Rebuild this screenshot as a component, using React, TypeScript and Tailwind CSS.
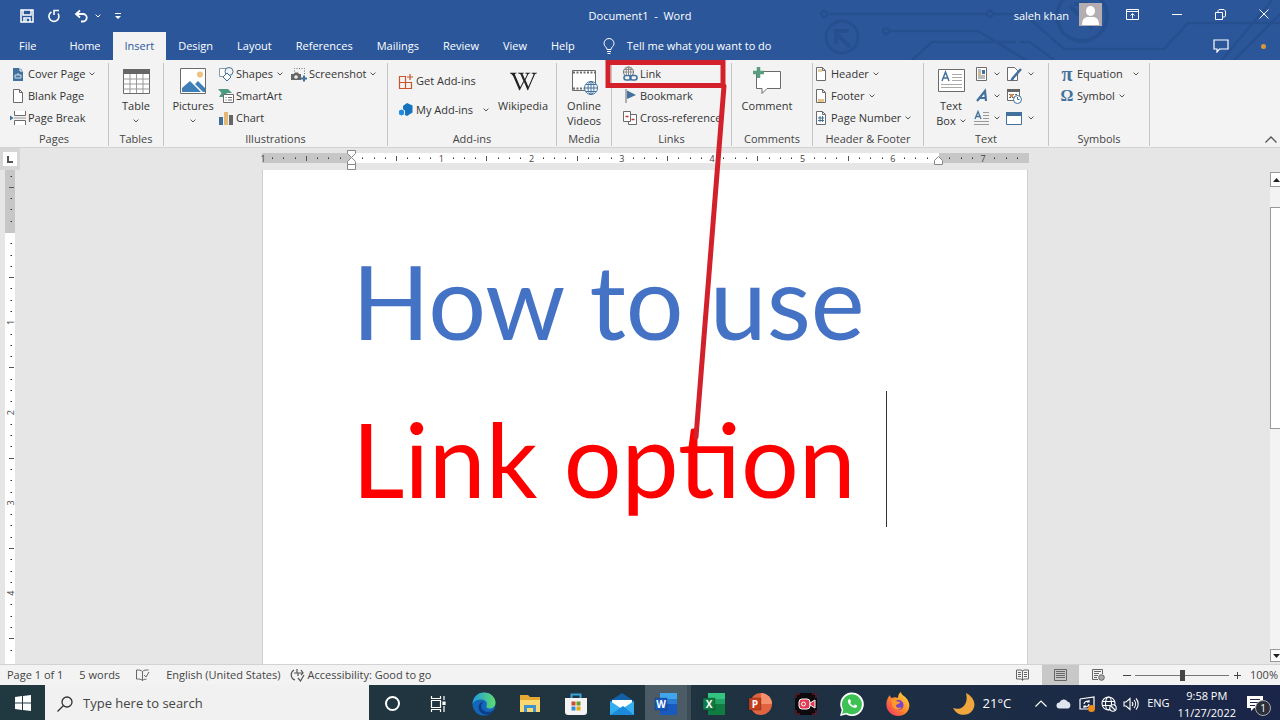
import type { ReactNode } from "react";
import { FaWikipediaW, FaWhatsapp } from "react-icons/fa";

const tabs = ["Home", "Insert", "Design", "Layout", "References", "Mailings", "Review", "View", "Help"];

const BLUE = "#41719c";
const GREY = "#6b6b6b";

function Caret({ className = "" }: { className?: string }) {
  return (
    <svg viewBox="0 0 6 4" className={`h-1 w-[6px] shrink-0 ${className}`} fill="none" stroke="#555" strokeWidth="1">
      <path d="M.6.6 3 3 5.4.6" />
    </svg>
  );
}

function Icon({ children, className = "h-4 w-4" }: { children: ReactNode; className?: string }) {
  return (
    <svg viewBox="0 0 16 16" className={`shrink-0 ${className}`} fill="none" stroke={GREY} strokeWidth="1">
      {children}
    </svg>
  );
}

function BigIcon({ children }: { children: ReactNode }) {
  return (
    <svg viewBox="0 0 28 28" className="h-7 w-7" fill="none" stroke={GREY} strokeWidth="1">
      {children}
    </svg>
  );
}

function Row({ icon, label, caret = false, far = false }: { icon: ReactNode; label: string; caret?: boolean; far?: boolean }) {
  return (
    <button className="flex h-[22px] items-center gap-[2px] whitespace-nowrap">
      {icon}
      <span>{label}</span>
      {caret && <Caret className={far ? "ml-2" : "ml-[2px]"} />}
    </button>
  );
}

function Big({ icon, label, caret = false, className = "" }: { icon: ReactNode; label: string; caret?: boolean; className?: string }) {
  return (
    <button className={`flex flex-col items-center pt-1 ${className}`}>
      {icon}
      <span className="mt-[3px] leading-[15px]">{label}</span>
      {caret && <Caret className="mt-[6px]" />}
    </button>
  );
}

function Group({ label, className, children }: { label: string; className: string; children: ReactNode }) {
  return (
    <section aria-label={label} className={`flex shrink-0 flex-col border-r border-[#c4c4c4] ${className}`}>
      <div className="flex h-[69px] items-start">{children}</div>
      <div className="text-center leading-[14px] text-[#444]">{label}</div>
    </section>
  );
}

const pageOutline = "M3.5 1.5h6l3 3v10h-9zM9.5 1.5v3h3";

function TitleArt() {
  return (
    <svg viewBox="0 0 480 60" className="absolute right-0 top-0 h-[60px] w-[480px]" fill="none" stroke="#264f8f" strokeWidth="2.500">
      <circle cx="24" cy="14" r="3" />
      <path d="M28 14h159M194 14h30l40 35h100l24-26h92" />
      <circle cx="190" cy="14" r="3" />
      <circle cx="86" cy="31" r="3" />
      <path d="M90 31h88l48 29M112 60l20-18h84M220 42h10l24 18M422 60l50-60M434 60l46-46" />
      <circle cx="42" cy="37" r="16" strokeWidth="3" />
      <path d="M50 47 36 33M36 44V31h13" strokeWidth="4" />
      <circle cx="282" cy="16" r="25" strokeWidth="4" />
      <path d="m270 6 22 22M274 4h14" strokeWidth="4" />
    </svg>
  );
}

function TitleBar() {
  return (
    <div className="relative grid h-8 grid-cols-[1fr_auto_1fr] items-center text-white">
      <div className="flex items-center pl-5">
        <button aria-label="Save">
          <svg viewBox="0 0 14 14" className="h-[14px] w-[14px]" fill="none" stroke="#fff" strokeWidth="1.5">
            <path d="M1 1h12v12H1zM3 1v5h8V1M4 13V9h6v4M6 10v3" />
          </svg>
        </button>
        <button aria-label="Repeat" className="ml-[13px]">
          <svg viewBox="0 0 14 14" className="h-[14px] w-[14px]" fill="none" stroke="#fff" strokeWidth="1.6">
            <path d="M4.500 3A5 5 0 1 0 11 4.500M7 6V1.500h5" />
          </svg>
        </button>
        <button aria-label="Undo" className="ml-[13px]">
          <svg viewBox="0 0 15 14" className="h-[14px] w-[15px]" fill="none" stroke="#fff" strokeWidth="1.8">
            <path d="M6 1.500 2 5l4 3.500M2 5h7a3.500 3.500 0 1 1 0 7.500H7" />
          </svg>
        </button>
        <svg viewBox="0 0 6 4" className="ml-[6px] h-1 w-[6px]" fill="none" stroke="#fff">
          <path d="M.6.6 3 3 5.4.6" />
        </svg>
        <button aria-label="Customize Quick Access Toolbar" className="ml-[14px]">
          <svg viewBox="0 0 6 7" className="h-[7px] w-[6px]" fill="#fff">
            <path d="M0 0h6v1H0zM0 3h6L3 6z" />
          </svg>
        </button>
      </div>
      <div className="whitespace-pre text-[11px]">Document1  -  Word</div>
      <div className="flex items-center justify-end pr-[11px]">
        <span className="text-[11px]">saleh khan</span>
        <svg viewBox="0 0 23 23" className="mb-1 ml-[10px] h-[23px] w-[23px]" fill="#fff">
          <path d="M0 0h23v23H0z" fill="#b4aeb2" />
          <ellipse cx="11.500" cy="8" rx="4.500" ry="5" />
          <path d="M3 22c0-6 3-8 6-8h5c3 0 6 2 6 8z" />
        </svg>
        <button aria-label="Ribbon Display Options" className="mb-1 ml-6">
          <svg viewBox="0 0 13 11" className="h-[11px] w-[13px]" fill="none" stroke="#fff">
            <path d="M.5.5h12v10H.5zM.5 2.500h12M6.500 9.500V5M4.500 6.500l2-2 2 2" />
          </svg>
        </button>
        <button aria-label="Minimize" className="mb-1 ml-[33px] h-px w-[10px] bg-white" />
        <button aria-label="Restore" className="mb-1 ml-[33px]">
          <svg viewBox="0 0 11 11" className="h-[11px] w-[11px]" fill="none" stroke="#fff">
            <path d="M.5 3.500h7v7h-7zM3 3V1.500L4 .5h5l1.500 1.500v5L9.500 8H8" />
          </svg>
        </button>
        <button aria-label="Close" className="mb-1 ml-[33px]">
          <svg viewBox="0 0 10 10" className="h-[10px] w-[10px]" fill="none" stroke="#fff">
            <path d="m.5.5 9 9M9.500.5l-9 9" />
          </svg>
        </button>
      </div>
    </div>
  );
}

function TabBar() {
  return (
    <nav className="relative flex h-7 items-stretch pl-[7px] text-[11px] text-white">
      <button className="mr-[9px] px-3">File</button>
      {tabs.map((t) => (
        <button key={t} className={t === "Insert" ? "bg-[#f3f3f3] px-3 text-[#2b579a]" : "px-3"}>
          {t}
        </button>
      ))}
      <button className="ml-4 flex items-center gap-3">
        <svg viewBox="0 0 12 16" className="h-4 w-3" fill="none" stroke="#fff">
          <path d="M4 11.500C4 9 1 8.500 1 5.500a5 5 0 0 1 10 0C11 8.500 8 9 8 11.500zM4 13.500h4M4.500 15.500h3" />
        </svg>
        Tell me what you want to do
      </button>
      <div className="ml-auto flex items-center pr-[14px]">
        <button aria-label="Comments">
          <svg viewBox="0 0 16 14" className="h-[14px] w-4" fill="none" stroke="#fff" strokeWidth="1.2">
            <path d="M1 1h14v9H6.500L4 13v-3H1z" />
          </svg>
        </button>
        <span className="ml-8 h-[5px] w-[5px] rounded-full bg-[#d9963c]" />
      </div>
    </nav>
  );
}

function Ribbon() {
  return (
    <div className="flex h-[88px] items-start border-b border-[#d2d2d2] bg-[#f3f3f3] pt-[3px] text-[11px] text-[#333]">
      <Group label="Pages" className="w-[109px]">
        <div className="pl-[10px]">
          <Row
            label="Cover Page"
            caret
            icon={
              <Icon>
                <path d="M3 2h7l3 3v10H3z" fill={BLUE} stroke="none" />
                <path d="M10 2v3h3" stroke="#fff" />
                <path d="M5 9h6v3H5zM8 7v2" stroke="#d5e3f0" />
              </Icon>
            }
          />
          <Row label="Blank Page" icon={<Icon><path d={pageOutline} fill="#fff" /></Icon>} />
          <Row
            label="Page Break"
            icon={
              <Icon>
                <path d="M4.500 1v4.500h11V1M4.500 15v-4.500h11V15" fill="#fff" />
                <path d="M4 8h12" stroke="#999" />
                <path d="m0 5.500 3.500 2.500L0 10.500z" fill={BLUE} stroke="none" />
              </Icon>
            }
          />
        </div>
      </Group>

      <Group label="Tables" className="w-[55px]">
        <Big
          className="w-full"
          label="Table"
          caret
          icon={
            <BigIcon>
              <path d="M1.500 2.500h26v24h-26z" fill="#fff" />
              <path d="M1 2h27v5H1z" fill="#666" stroke="none" />
              <path d="M1.500 12h26M1.500 17h26M1.500 22h26M8 7v19M14.500 7v19M21 7v19" stroke="#999" />
            </BigIcon>
          }
        />
      </Group>

      <Group label="Illustrations" className="w-[224px]">
        <Big
          className="w-[54px] pl-1"
          label="Pictures"
          caret
          icon={
            <BigIcon>
              <path d="M1.500 1.500h25v25h-25z" fill="#fff" />
              <circle cx="21" cy="7.500" r="3" fill="#ecc27e" stroke="none" />
              <path d="M3 25v-4l8-7 11 11zM16 17l3-3 7 7v4h-2z" fill="#3f7fb8" stroke="none" />
            </BigIcon>
          }
        />
        <div>
          <div className="flex gap-2">
            <Row
              label="Shapes"
              caret
              icon={
                <Icon>
                  <path d="M1.500 2.500h8v8h-8z" fill="#fff" stroke="#8a9aa8" />
                  <circle cx="11" cy="5.500" r="4" fill="#f3f3f3" stroke={BLUE} />
                  <path d="m9 7 4 4-4 4-4-4z" fill="#fff" stroke={BLUE} />
                </Icon>
              }
            />
            <Row
              label="Screenshot"
              caret
              icon={
                <Icon>
                  <path d="M3.500 8V2.500h10V9" strokeDasharray="1 1.500" />
                  <path d="M0 8h3l1-1.500h3L8 8h2v6H0z" fill="#666" stroke="none" />
                  <circle cx="5" cy="11" r="1.800" fill="#eee" stroke="none" />
                  <path d="M13 9.500v6M10 12.500h6" stroke={BLUE} strokeWidth="2" />
                </Icon>
              }
            />
          </div>
          <Row
            label="SmartArt"
            icon={
              <Icon>
                <path d="M0 1h10l4 4H9l-3 4H1l2.500-4z" fill="#4d9b80" stroke="none" />
                <path d="M5.500 6.500h10v8h-10z" fill="#fff" />
                <path d="M7.500 9.500h1M10 9.500h4M7.500 12h1M10 12h4" />
              </Icon>
            }
          />
          <Row
            label="Chart"
            icon={
              <Icon>
                <path d="M1 7h4v8H1z" fill="#3f6f9f" stroke="none" />
                <path d="M6 2h4v13H6z" fill="#e6b878" stroke="none" />
                <path d="M11 5h4v10h-4z" fill="#666" stroke="none" />
              </Icon>
            }
          />
        </div>
      </Group>

      <Group label="Add-ins" className="w-[169px]">
        <div className="flex flex-col gap-[7px] pl-[10px] pt-[7px]">
          <Row
            label="Get Add-ins"
            icon={
              <Icon>
                <path d="M1.500 3.500h6v6h-6zM1.500 9.500h6v6h-6zM7.500 9.500h6v6h-6zM12 1v6M9 4h6" stroke="#c8552b" strokeWidth="1.200" />
              </Icon>
            }
          />
          <Row
            label="My Add-ins"
            caret
            far
            icon={
              <Icon>
                <path d="m9 1 5.500 2.500v7L9 14l-4-2V4z" fill="#1673c0" stroke="none" />
                <path d="m3.500 7 3 1.500v4l-3 1.500-3-1.500v-4z" fill="#1f8ae0" stroke="#f3f3f3" />
              </Icon>
            }
          />
        </div>
        <Big
          className="ml-auto w-[66px]"
          label="Wikipedia"
          icon={
            <span className="flex h-7 items-center">
              <FaWikipediaW className="h-[27px] w-[27px] text-[#222]" />
            </span>
          }
        />
      </Group>

      <Group label="Media" className="w-[55px]">
        <Big
          className="w-full"
          label="Online Videos"
          icon={
            <BigIcon>
              <path d="M2.500 3.500h23v20h-23z" fill="#fff" />
              <path d="M3 5.500h22M3 21.500h14" strokeDasharray="2 1.500" strokeWidth="2" />
              <circle cx="21" cy="21" r="6.500" fill="#fff" stroke={BLUE} />
              <path d="M14.500 21h13M21 14.500v13M16 17.500h10M16 24.500h10" stroke={BLUE} />
              <ellipse cx="21" cy="21" rx="3" ry="6.500" stroke={BLUE} />
            </BigIcon>
          }
        />
      </Group>

      <Group label="Links" className="w-[120px]">
        <div className="pl-[10px]">
          <Row
            label="Link"
            icon={
              <Icon>
                <circle cx="6.500" cy="6" r="5" fill="#fff" />
                <path d="M1.500 6h10M6.500 1v9M2.500 3.500h8" stroke="#888" />
                <ellipse cx="6.500" cy="6" rx="2.300" ry="5" stroke="#888" />
                <path d="M1 9h15v6H1z" fill="#f3f3f3" stroke="none" />
                <rect x="2" y="9.500" width="7" height="4.500" rx="2.200" stroke={BLUE} strokeWidth="1.600" />
                <rect x="8" y="9.500" width="7" height="4.500" rx="2.200" stroke={BLUE} strokeWidth="1.600" />
              </Icon>
            }
          />
          <Row
            label="Bookmark"
            icon={
              <Icon>
                <path d="M4 1v14" />
                <path d="M5 2.500 14 7l-9 4z" fill={BLUE} stroke="none" />
              </Icon>
            }
          />
          <Row
            label="Cross-reference"
            icon={
              <Icon>
                <path d="M8.500 4.500h6v10h-8V12" fill="#fff" />
                <path d="M1.500 1.500h7v10h-7z" fill="#fff" />
                <path d="M3.500 6.500h3M9.500 9.500h3" stroke="#c0392b" strokeWidth="1.500" />
              </Icon>
            }
          />
        </div>
      </Group>

      <Group label="Comments" className="w-[81px]">
        <Big
          className="w-[70px]"
          label="Comment"
          icon={
            <BigIcon>
              <path d="M3.500 4.500h24v17H14l-5 5v-5H3.500z" fill="#fff" />
              <path d="M5.500 0v11M0 5.500h11" stroke="#5a9c80" strokeWidth="3.500" />
            </BigIcon>
          }
        />
      </Group>

      <Group label="Header & Footer" className="w-[111px]">
        <div>
          <Row label="Header" caret icon={<Icon><path d={pageOutline} fill="#fff" /><path d="M5 3h4v3H5z" fill="#e2cf9c" stroke="none" /></Icon>} />
          <Row label="Footer" caret icon={<Icon><path d={pageOutline} fill="#fff" /><path d="M5 11h6v3H5z" fill="#e6c489" stroke="none" /></Icon>} />
          <Row label="Page Number" caret icon={<Icon><path d={pageOutline} fill="#fff" /><path d="M7 6v6M9.500 6v6M5 8h6M5 10.500h6" stroke={BLUE} /></Icon>} />
        </div>
      </Group>

      <Group label="Text" className="w-[125px]">
        <button className="flex w-[50px] flex-col items-center pl-1 pt-1">
          <BigIcon>
            <path d="M1.500 2.500h26v22h-26z" fill="#fff" />
            <path d="M15 7.500h10M15 10.500h10M15 13.500h10M4 17.500h21M4 20.500h21" stroke="#aaa" />
            <path d="m5 14 3.500-9L12 14M6 11h5" stroke={BLUE} strokeWidth="1.500" />
          </BigIcon>
          <span className="mt-[3px] leading-[15px]">Text</span>
          <span className="flex items-center gap-1 leading-[15px]">
            Box <Caret />
          </span>
        </button>
        <div className="grid grid-cols-[auto_auto] gap-x-[6px]">
          <button aria-label="Quick Parts" className="flex h-[22px] items-center gap-1">
            <Icon>
              <path d="M2.500 1.500h10v13h-10z" fill="#fff" />
              <path d="M4 4h3M4 6h3M4 10h7M4 12h7" stroke="#777" />
              <path d="M8 4h3v4H8z" fill={BLUE} stroke="none" />
              <path d="M4 7h3v2H4z" fill="#e6b878" stroke="none" />
            </Icon>
            <Caret />
          </button>
          <button aria-label="Signature Line" className="flex h-[22px] items-center gap-[6px]">
            <Icon>
              <path d="M1.500 1.500h7l3 3v10h-10z" fill="#fff" />
              <path d="m15 3-8 9-1.500 2.500" stroke={BLUE} strokeWidth="2.500" />
            </Icon>
            <Caret />
          </button>
          <button aria-label="WordArt" className="flex h-[22px] items-center gap-1">
            <Icon>
              <path d="M3 13 11 3l1 10M6 10h6" stroke={BLUE} strokeWidth="2.200" />
            </Icon>
            <Caret />
          </button>
          <button aria-label="Date & Time" className="flex h-[22px] items-center">
            <Icon>
              <path d="M1.500 1.500h12v11h-12z" fill="#fff" />
              <path d="M1 1h13v3H1z" fill="#666" stroke="none" />
              <path d="M3 6.500h9M3 9.500h5" strokeDasharray="2 1" />
              <path d="M4 6h3v3H4z" fill="#d98646" stroke="none" />
              <circle cx="11.500" cy="11.500" r="4" fill="#fff" stroke={BLUE} />
              <path d="M11.500 9v2.500h2" stroke={BLUE} />
            </Icon>
          </button>
          <button aria-label="Drop Cap" className="flex h-[22px] items-center gap-1">
            <Icon>
              <path d="m1 9 3-7.500L7 9M2 6.500h4" stroke={BLUE} strokeWidth="1.300" />
              <path d="M9 2.500h6M9 5.500h6M9 8.500h6M0 11.500h15M0 14.500h15" stroke="#999" />
            </Icon>
            <Caret />
          </button>
          <button aria-label="Object" className="flex h-[22px] items-center gap-[6px]">
            <Icon>
              <path d="M.5 2.500h15v12H.5z" fill="#fff" stroke={BLUE} />
              <path d="M0 2h16v4H0z" fill={BLUE} stroke="none" />
            </Icon>
            <Caret />
          </button>
        </div>
      </Group>

      <Group label="Symbols" className="w-[101px]">
        <div className="pl-[10px]">
          <Row label="Equation" caret far icon={<span className="w-4 text-center font-[Liberation_Serif,serif] text-xl leading-4 font-bold text-[#41719c]">π</span>} />
          <Row label="Symbol" caret icon={<span className="w-4 text-center font-[Liberation_Serif,serif] text-base leading-4 font-bold text-[#41719c]">Ω</span>} />
        </div>
      </Group>
      <button aria-label="Collapse the Ribbon" className="mr-[3px] mb-1 ml-auto self-end">
        <svg viewBox="0 0 12 7" className="h-[7px] w-3" fill="none" stroke="#555" strokeWidth="1.300">
          <path d="m.5 6.500 5.500-5.500 5.500 5.500" />
        </svg>
      </button>
    </div>
  );
}

const INCH = 90.3;

// Eighth-inch marks measured from the left margin, which sits 89px into the page.
function HorizontalRuler() {
  const marks = Array.from({ length: 67 }, (_, i) => i - 7);
  return (
    <svg viewBox="0 0 770 20" className="h-5 w-[770px]" fontFamily="Open Sans, sans-serif" fontSize="9" textAnchor="middle">
      <path d="M2 3h767v10H2z" fill="#c6c6c6" />
      <path d="M91 3h588v10H91z" fill="#fff" />
      {marks.map((m) => {
        const x = 91 + (m * INCH) / 8;
        if (m === 0 || x > 765 || m === 52) return null;
        if (m % 8 === 0) return <text key={m} x={x} y="11.500" fill="#444">{m / 8}</text>;
        return m % 4 === 0 ? (
          <path key={m} d={`M${Math.round(x)} 6h1v5h-1z`} fill="#555" />
        ) : (
          <path key={m} d={`M${Math.round(x)} 7.500h1v1.500h-1z`} fill="#333" />
        );
      })}
      <text x="3" y="11.500" fill="#444">1</text>
      <g fill="#fff" stroke="#888">
        <path d="M87.500.5h8v3l-4 4-4-4zM91.500 7.500l4 4v3h-8v-3zM87.500 14.500h8v5h-8z" />
        <path d="m678.500 6.500 4 4v4h-8v-4z" />
      </g>
    </svg>
  );
}

function VerticalRuler() {
  const marks = Array.from({ length: 43 }, (_, i) => i - 5);
  return (
    <svg viewBox="0 0 16 494" className="ml-[2px] h-[494px] w-4" fontFamily="Open Sans, sans-serif" fontSize="9" textAnchor="middle">
      <path d="M3 0h10v494H3z" fill="#fff" />
      <path d="M3 0h10v63H3z" fill="#c6c6c6" />
      {marks.map((m) => {
        const y = 62 + (m * INCH) / 8;
        if (m === 0) return null;
        if (m % 8 === 0)
          return (
            <text key={m} transform={`translate(12 ${y}) rotate(-90)`} fill="#444">
              {m / 8}
            </text>
          );
        return m % 4 === 0 ? (
          <path key={m} d={`M7 ${Math.round(y)}h5v1H7z`} fill="#555" />
        ) : (
          <path key={m} d={`M8.500 ${Math.round(y)}h1.500v1H8.500z`} fill="#333" />
        );
      })}
    </svg>
  );
}

function Workspace() {
  return (
    <main className="grid min-h-0 flex-1 grid-cols-[20px_1fr_10px] bg-[#e6e6e6]">
      <div className="flex min-h-0 flex-col overflow-hidden">
        <button aria-label="Tab selector" className="flex h-[22px] w-5 shrink-0 items-center justify-center bg-[#d6d6d6]">
          <svg viewBox="0 0 14 14" className="h-[14px] w-[14px]">
            <path d="M0 0h14v14H0z" fill="#fff" />
            <path d="M5 4v6h5" fill="none" stroke="#555" strokeWidth="2" />
          </svg>
        </button>
        <VerticalRuler />
      </div>

      <div className="flex min-h-0 flex-col items-center overflow-hidden">
        <div className="flex h-[22px] w-[770px] shrink-0 pt-[2px]">
          <HorizontalRuler />
        </div>
        <article className="w-[766px] flex-1 border-x border-[#d0d0d0] bg-white pt-[52px] pl-[89px] font-[Lato,sans-serif] text-[102px] leading-[158px] whitespace-nowrap">
          <p className="text-[#4472c4]">How to use</p>
          <p className="flex items-center gap-[30px] text-[#ff0000]">
            Link option
            <span className="h-[136px] w-px bg-[#333]" />
          </p>
        </article>
      </div>

      <div className="flex flex-col pt-6">
        <button aria-label="Scroll up" className="flex h-[15px] items-center justify-end border border-r-0 border-[#999] bg-white">
          <svg viewBox="0 0 7 4" className="h-1 w-[7px]">
            <path d="M0 4h7L3.500 0z" fill="#222" />
          </svg>
        </button>
        <div className="flex-1 bg-[#f3f3f3] pt-5">
          <div className="h-[222px] border border-r-0 border-[#999] bg-white" />
        </div>
        <button aria-label="Scroll down" className="mb-[2px] flex h-[13px] items-center justify-end border border-r-0 border-[#999] bg-white">
          <svg viewBox="0 0 7 4" className="h-1 w-[7px]">
            <path d="M0 0h7L3.500 4z" fill="#222" />
          </svg>
        </button>
      </div>
    </main>
  );
}

function StatusBar() {
  return (
    <footer className="flex h-[21px] items-center border-t border-[#d2d2d2] bg-[#f3f3f3] pl-[7px] text-[11px] whitespace-nowrap text-[#444]">
      <span>Page 1 of 1</span>
      <span className="ml-4">5 words</span>
      <svg viewBox="0 0 14 12" className="ml-4 h-3 w-[14px]" fill="none" stroke="#666">
        <path d="M6.500 2.500C5 1 3 1 .5 1v9c2.500 0 4.500 0 6 1.500V2.500C8 1 9.500 1 12.500 1M6.500 11.500c1-1 2-1.300 4-1.300M8 6l2 2 3-5" />
      </svg>
      <span className="ml-4">English (United States)</span>
      <svg viewBox="0 0 15 14" className="ml-[10px] h-[14px] w-[15px]" fill="none" stroke="#555" strokeWidth="1.200">
        <path d="M4 2A5.500 5.500 0 0 0 5 12M7 1v4M4 5h9M8 5v3M8 10l2.500 3L14 7" />
        <path d="m11 2 2 3-2 2" />
      </svg>
      <span className="ml-[2px]">Accessibility: Good to go</span>

      <div className="ml-auto flex h-full items-center">
        <button aria-label="Read Mode">
          <svg viewBox="0 0 13 12" className="h-3 w-[13px]" fill="none" stroke="#666">
            <path d="M6.500 1.500v10M6.500 2 5 1H.5v9H5l1.500 1L8 10h4.500V1H8zM2 3.500h3M2 5.500h3M2 7.500h3M8 3.500h3M8 5.500h3M8 7.500h3" />
          </svg>
        </button>
        <button aria-label="Print Layout" className="ml-[13px] flex h-full w-[37px] items-center justify-center bg-[#c8c8c8]">
          <svg viewBox="0 0 13 12" className="h-3 w-[13px]" fill="none" stroke="#666">
            <path d="M.5.5h12v11H.5zM2 2.500h9M2 4.500h9M2 6.500h9M2 8.500h9" />
          </svg>
        </button>
        <button aria-label="Web Layout" className="ml-[13px]">
          <svg viewBox="0 0 13 12" className="h-3 w-[13px]" fill="none" stroke="#666">
            <path d="M6 10.500H.5v-10h10V5M2 2.500h7M2 4.500h5M2 6.500h4M2 8.500h3" />
            <circle cx="9.500" cy="8.500" r="2.800" fill="#aaa" />
          </svg>
        </button>
        <button aria-label="Zoom out" className="ml-[18px] h-px w-2 bg-[#444]" />
        <input
          type="range"
          aria-label="Zoom"
          defaultValue={50}
          className="ml-1 h-3 w-[94px] appearance-none bg-[linear-gradient(#777,#777)] bg-[length:100%_1px] bg-center bg-no-repeat [&::-webkit-slider-thumb]:h-[11px] [&::-webkit-slider-thumb]:w-[5px] [&::-webkit-slider-thumb]:appearance-none [&::-webkit-slider-thumb]:bg-[#444]"
        />
        <button aria-label="Zoom in" className="ml-1">
          <svg viewBox="0 0 9 9" className="h-[9px] w-[9px]" stroke="#444">
            <path d="M4.500 1v7M1 4.500h7" />
          </svg>
        </button>
        <span className="mr-[2px] ml-2">100%</span>
      </div>
    </footer>
  );
}

function OfficeIcon({ letter, dark, mid, light, round = false }: { letter: string; dark: string; mid: string; light: string; round?: boolean }) {
  return (
    <svg viewBox="0 0 24 24" className="h-6 w-6">
      {round ? (
        <>
          <circle cx="13" cy="12" r="11" fill={mid} />
          <path d="M13 1a11 11 0 0 1 11 11H13z" fill={light} />
        </>
      ) : (
        <>
          <path d="M6 1h17v6H6z" fill={light} />
          <path d="M6 7h17v5H6z" fill={mid} />
          <path d="M6 12h17v11H6z" fill={dark} />
        </>
      )}
      <path d="M1 6h12v12H1z" fill={dark} stroke="#0003" />
      <text x="7" y="15.500" fontSize="10" fontWeight="700" fontFamily="Open Sans, sans-serif" fill="#fff" textAnchor="middle">
        {letter}
      </text>
    </svg>
  );
}

const apps: { name: string; icon: ReactNode }[] = [
  { name: "Cortana", icon: <span className="h-[15px] w-[15px] rounded-full border-2 border-white" /> },
  {
    name: "Task View",
    icon: (
      <svg viewBox="0 0 16 16" className="h-4 w-4" fill="none" stroke="#fff" strokeWidth="1.200">
        <path d="M1.500 4.500h9v7h-9zM1.500 0v2.500h9V0M1.500 16v-2.500h9V16M14 0v4M14 10v6" />
        <path d="M13 6h2v2.500h-2z" fill="#fff" />
      </svg>
    ),
  },
  {
    name: "Edge",
    icon: (
      <svg viewBox="0 0 24 24" className="h-6 w-6">
        <defs>
          <linearGradient id="edgeTop" x1="0" x2="1">
            <stop offset="0" stopColor="#1f9be0" />
            <stop offset="1" stopColor="#5fdc6a" />
          </linearGradient>
        </defs>
        <circle cx="12" cy="12" r="11.500" fill="#1566b8" />
        <path d="M.5 12C1 5 6 .5 12 .5c7 0 11.500 5 11.500 10 0 4-3 6-6 6-2.500 0-3.500-1-3-2.500C16 10 13 7.500 9 7.500 5 7.500 2 9 .5 12z" fill="url(#edgeTop)" />
        <path d="M12 10c-3 1-4 5-1 8 3 2.500 7 2.500 11 0-1 2-3 4-5 4.500C10 23.500 5 19 7 13c1-2.500 3-3.500 5-3z" fill="#0c3f87" />
      </svg>
    ),
  },
  {
    name: "File Explorer",
    icon: (
      <svg viewBox="0 0 22 20" className="h-5 w-[22px]">
        <path d="M1 1h8l2 2h10v15H1z" fill="#e5a832" />
        <path d="M1 6h20v12H1z" fill="#fbd872" />
        <path d="M5 18v-7h12v7h-3v-4H8v4z" fill="#3f92d0" />
      </svg>
    ),
  },
  {
    name: "Microsoft Store",
    icon: (
      <svg viewBox="0 0 22 24" className="h-6 w-[22px]">
        <path d="M6.500 6V2.500h9V6" fill="none" stroke="#36a3dc" strokeWidth="2" />
        <path d="M0 6h22v14a3 3 0 0 1-3 3H3a3 3 0 0 1-3-3z" fill="#f3f3f3" />
        <path d="M6.500 9.500h4v4h-4z" fill="#c9502f" />
        <path d="M11.500 9.500h4v4h-4z" fill="#6d9a2a" />
        <path d="M6.500 14.500h4v4h-4z" fill="#2f8fd8" />
        <path d="M11.500 14.500h4v4h-4z" fill="#e5a90c" />
      </svg>
    ),
  },
  {
    name: "Mail",
    icon: (
      <svg viewBox="0 0 24 22" className="h-[22px] w-6">
        <path d="M0 8 12 0l12 8v3H0z" fill="#1460a8" />
        <path d="M2 7h20v8H2z" fill="#fff" />
        <path d="M0 8v14h24V8l-12 8z" fill="#35aef0" />
        <path d="M0 22 13 13l11 9z" fill="#1c8ad8" />
      </svg>
    ),
  },
  { name: "Word", icon: <OfficeIcon letter="W" dark="#185abd" mid="#2b7cd3" light="#41a5ee" /> },
  { name: "Excel", icon: <OfficeIcon letter="X" dark="#107c41" mid="#21a366" light="#33c481" /> },
  { name: "PowerPoint", icon: <OfficeIcon letter="P" dark="#c43e1c" mid="#e0643f" light="#f58f6c" round /> },
  {
    name: "Screen Recorder",
    icon: (
      <svg viewBox="0 0 24 24" className="h-6 w-6" fill="none">
        <rect x="1" y="1" width="22" height="22" rx="3" fill="#0c0a0c" />
        <path d="M2 6V2h4M18 2h4v4M22 18v4h-4M6 22H2v-4" stroke="#8d2030" />
        <rect x="5" y="7" width="11" height="10" rx="3" fill="#e23a55" stroke="#fff" />
        <path d="m16 11 5-3v8l-5-3z" fill="#e23a55" stroke="#fff" />
        <circle cx="9.500" cy="12" r="2" stroke="#fff" />
      </svg>
    ),
  },
  {
    name: "WhatsApp",
    icon: (
      <span className="relative flex h-6 w-6 items-center justify-center">
        <svg viewBox="0 0 24 24" className="absolute inset-0 h-6 w-6">
          <path d="m0 24 1.700-6A11.800 11.800 0 1 1 6 22.400z" fill="#fff" />
          <path d="m2 22 1.300-4.500A10 10 0 1 1 6.500 20.800z" fill="#3cc152" />
        </svg>
        <FaWhatsapp className="relative h-[21px] w-[21px] text-white [clip-path:circle(32%)]" />
      </span>
    ),
  },
  {
    name: "Firefox",
    icon: (
      <svg viewBox="0 0 24 24" className="h-6 w-6">
        <defs>
          <linearGradient id="fox" x1="1" y1="0" x2="0" y2="1">
            <stop offset="0" stopColor="#ffe14a" />
            <stop offset=".5" stopColor="#ff8a2a" />
            <stop offset="1" stopColor="#ee2a6a" />
          </linearGradient>
        </defs>
        <path d="M4 3c0 2 1 3 2 3 2-1 4-1 6 0C12 3 13 1 15 0c0 3 4 4 6 7 2 3 3 6 2 9-1 5-6 8-11 8S1 20 .5 14C0 10 1 6 4 3z" fill="url(#fox)" />
        <circle cx="12.500" cy="13" r="5" fill="#7a45c8" />
        <path d="M5 8c3-1 5 0 6 1.500l3 .5c0 2-3 2-4 3.500 0 2.500 3 3 5.500 1.500C14 19 8 18.500 6.500 14 6 12 6 10 5 8z" fill="#ff9a2a" />
      </svg>
    ),
  },
];

function Taskbar() {
  return (
    <div className="flex h-[35px] items-stretch bg-linear-to-r from-[#20383f] via-[#20343f] to-[#1a2549] text-white">
      <button aria-label="Start" className="flex w-[45px] items-center justify-center">
        <svg viewBox="0 0 16 16" className="h-4 w-4" fill="#fff">
          <path d="m0 2 7-1v6.500H0zM8 .9 16 0v7.500H8zM0 8.500h7V15l-7-1zM8 8.500h8V16l-8-1z" />
        </svg>
      </button>
      <label className="flex w-[324px] items-center gap-[10px] bg-[#f1f1f1] pt-[2px] pl-3">
        <svg viewBox="0 0 16 16" className="h-4 w-4 shrink-0" fill="none" stroke="#333" strokeWidth="1.300">
          <circle cx="10" cy="6" r="5" />
          <path d="M6.500 9.500 .5 15.500" />
        </svg>
        <input type="text" aria-label="Search" placeholder="Type here to search" className="w-full bg-transparent text-[13px] outline-none placeholder:text-[#444]" />
      </label>
      {apps.map((a) => (
        <button
          key={a.name}
          aria-label={a.name}
          className={`flex w-[46px] items-center justify-center pt-[2px] ${a.name === "Word" ? "border-r-4 border-[#3c4d58] bg-[#4b5c66]" : ""}`}
        >
          {a.icon}
        </button>
      ))}
      <div className="ml-auto flex items-center pt-[2px] pr-[9px]">
        <svg viewBox="0 0 22 22" className="h-[22px] w-[22px]">
          <path d="M13 0c8 4 11 12 6 18-5 6-15 5-19-3 8 3 16-3 13-15z" fill="#f0a63c" />
        </svg>
        <span className="ml-2 text-[13px]">21°C</span>
        <button aria-label="Show hidden icons" className="ml-6">
          <svg viewBox="0 0 12 7" className="h-[7px] w-3" fill="none" stroke="#fff" strokeWidth="1.200">
            <path d="m.5 6.500 5.500-5.500 5.500 5.500" />
          </svg>
        </button>
        <svg viewBox="0 0 16 11" className="ml-[9px] h-[11px] w-4">
          <path d="M3.500 10.500a3 3 0 0 1 0-6 4.500 4.500 0 0 1 8-1 3.800 3.800 0 0 1 1 7z" fill="#dfe6ee" />
        </svg>
        <svg viewBox="0 0 16 16" className="ml-[7px] h-4 w-4" fill="none" stroke="#fff" strokeWidth="1.200">
          <path d="M1 3 15 1v11M1 3v10h8M5 8a3 3 0 0 1 5-2M10 4v2H8M10 8a3 3 0 0 1-5 2M5 12v-2h2" />
          <circle cx="12.500" cy="12.500" r="3.500" fill="#f08c1e" stroke="none" />
        </svg>
        <svg viewBox="0 0 16 16" className="ml-[6px] h-4 w-4" fill="none" stroke="#fff" strokeWidth="1.100">
          <circle cx="7.500" cy="7.500" r="6.500" />
          <ellipse cx="7.500" cy="7.500" rx="3" ry="6.500" />
          <path d="M1 5.500h13M1 9.500h13" />
          <circle cx="12" cy="12" r="3.200" fill="#1c2d47" />
          <path d="m10 10 4 4" />
        </svg>
        <svg viewBox="0 0 16 14" className="ml-[6px] h-[14px] w-4" fill="none" stroke="#fff" strokeWidth="1.100">
          <path d="M1 5h2l4-3.500v11L3 9H1zM9 5a3 3 0 0 1 0 4M11 3a6 6 0 0 1 0 8M13 1.500a8 8 0 0 1 0 11" />
        </svg>
        <span className="ml-2 text-[11px]">ENG</span>
        <div className="ml-2 text-center text-[11px] leading-[17px]">
          <div>9:58 PM</div>
          <div>11/27/2022</div>
        </div>
        <button aria-label="Notifications" className="relative ml-[11px] flex h-6 w-6 items-start">
          <svg viewBox="0 0 16 15" className="mt-1 h-[15px] w-4">
            <path d="M0 0h16v12H7l-3 3v-3H0z" fill="#fff" />
            <path d="M3 3.500h10M3 6.500h10M3 9.500h5" stroke="#1c2a48" />
          </svg>
          <span className="absolute right-0 bottom-0 flex h-4 w-4 items-center justify-center rounded-full border border-[#aaa] bg-[#2b2f3a] text-[10px] leading-none">1</span>
        </button>
      </div>
    </div>
  );
}

export default function App() {
  return (
    <div className="relative flex h-screen flex-col overflow-hidden font-[Open_Sans,sans-serif]">
      <header className="relative bg-[#2b579a]">
        <TitleArt />
        <TitleBar />
        <TabBar />
      </header>
      <Ribbon />
      <Workspace />
      <StatusBar />
      <Taskbar />
      {/* hand-drawn marker: box round Link, line down to the heading */}
      <svg viewBox="0 0 130 385" className="pointer-events-none absolute top-[58px] left-[604px] h-[385px] w-[130px]" fill="none" stroke="#d3212c" strokeWidth="5">
        <path d="M4 4.500h115v23H4z" />
        <path d="M120 28 92 379" strokeLinecap="round" />
      </svg>
    </div>
  );
}
